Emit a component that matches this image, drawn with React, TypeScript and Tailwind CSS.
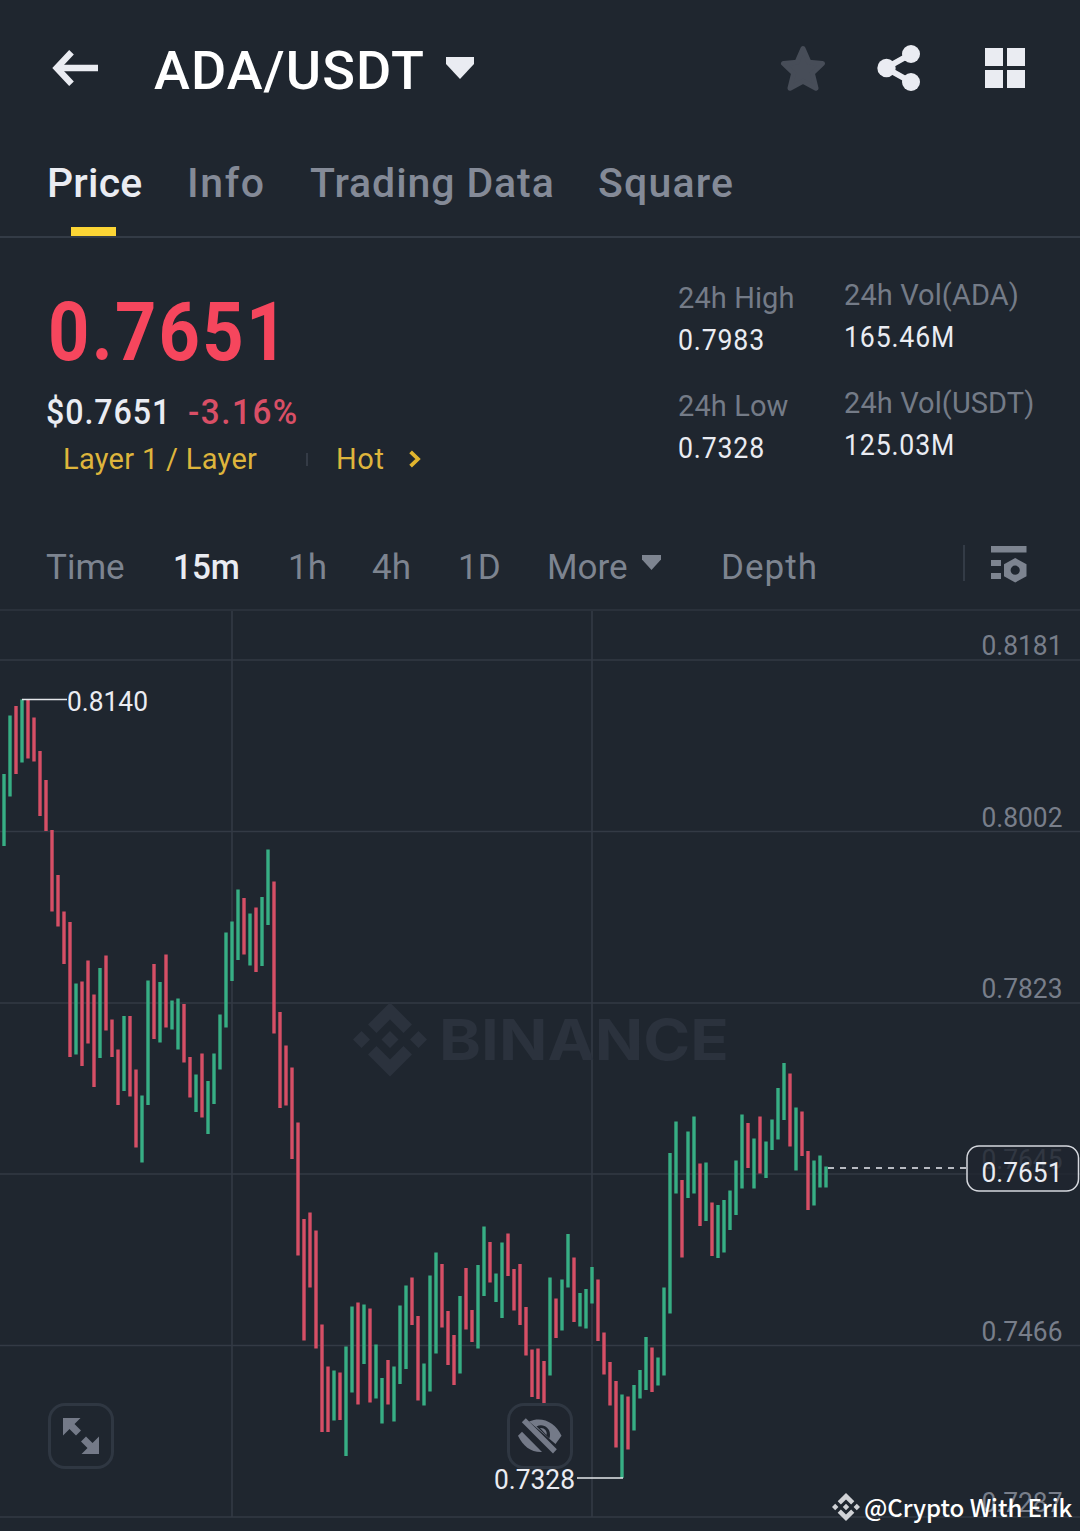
type Candle = ["u" | "d", number, number];

// [direction, high, low] in canvas units, one entry per 15 minute candle
const CANDLES: Candle[] = [
  ["u", 774, 846], ["u", 715.5, 796.5], ["d", 706, 774], ["u", 699.5, 762.5], ["d", 700, 758.5],
  ["d", 717.5, 761.5], ["d", 751, 816], ["d", 780, 831], ["d", 830, 911.5], ["d", 875, 926.5],
  ["d", 911.5, 964], ["d", 922, 1057], ["u", 983.5, 1054.5], ["d", 981.5, 1066], ["d", 960.5, 1043.5],
  ["d", 994.5, 1087], ["u", 968, 1058], ["d", 955.5, 1030.5], ["d", 1019.5, 1057], ["d", 1049.5, 1105],
  ["u", 1016, 1091], ["d", 1016, 1096.5], ["d", 1069.5, 1147.5], ["u", 1095.5, 1162.5], ["u", 980.5, 1105],
  ["d", 964, 1039], ["u", 982, 1042.5], ["d", 954.5, 1027.5], ["u", 1000.5, 1029.5], ["u", 998.5, 1049.5],
  ["d", 1004, 1062.5], ["d", 1057, 1097.5], ["u", 1074.5, 1112], ["d", 1053.5, 1117.5], ["u", 1081, 1134],
  ["u", 1053.5, 1104], ["u", 1014.5, 1069.5], ["u", 932.5, 1027.5], ["u", 921.5, 981], ["u", 889.5, 960],
  ["d", 898, 954.5], ["u", 913.5, 965.5], ["d", 907.5, 972], ["u", 897, 966], ["u", 849.5, 925],
  ["d", 881.5, 1033.5], ["d", 1012, 1108], ["d", 1045.5, 1105.5], ["d", 1067.5, 1159], ["d", 1122.5, 1255.5],
  ["d", 1219, 1340.5], ["d", 1212.5, 1287.5], ["d", 1230.5, 1348.5], ["d", 1324.5, 1432], ["d", 1366.5, 1432],
  ["u", 1370.5, 1420.5], ["d", 1372.5, 1420], ["u", 1346.5, 1456], ["u", 1306.5, 1392.5], ["d", 1302.5, 1404.5],
  ["u", 1304.5, 1364], ["d", 1308.5, 1402.5], ["u", 1344.5, 1398.5], ["u", 1378, 1423.5], ["d", 1360, 1404.5],
  ["u", 1366.5, 1421.5], ["u", 1305.5, 1384], ["u", 1285.5, 1369], ["d", 1277.5, 1325], ["d", 1316, 1400.5],
  ["u", 1363.5, 1405.5], ["u", 1275.5, 1391.5], ["u", 1252.5, 1353.5], ["d", 1264, 1327.5], ["d", 1311, 1365],
  ["d", 1335, 1385], ["u", 1296, 1373.5], ["d", 1268, 1329.5], ["d", 1310, 1342], ["u", 1265, 1348.5],
  ["u", 1226.5, 1296], ["d", 1242, 1282.5], ["u", 1273.5, 1302], ["u", 1242.5, 1318], ["d", 1233.5, 1276],
  ["d", 1269, 1310.5], ["d", 1264, 1325], ["d", 1307, 1355.5], ["d", 1349.5, 1397], ["d", 1348.5, 1399],
  ["d", 1361, 1403.5], ["u", 1277.5, 1375.5], ["d", 1298.5, 1338], ["u", 1279.5, 1330.5], ["u", 1234, 1287.5],
  ["d", 1257.5, 1322], ["u", 1293, 1326.5], ["u", 1289, 1328.5], ["u", 1267, 1303.5], ["d", 1279.5, 1341],
  ["d", 1332.5, 1374.5], ["d", 1362, 1405.5], ["d", 1381, 1447.5], ["u", 1394.5, 1478], ["d", 1396.5, 1449.5],
  ["u", 1385, 1430.5], ["u", 1370, 1398.5], ["u", 1337, 1390], ["d", 1347.5, 1392], ["u", 1357.5, 1385.5],
  ["u", 1287.5, 1375.5], ["u", 1153, 1313.5], ["u", 1121.5, 1193.5], ["d", 1180, 1257.5], ["u", 1131.5, 1198],
  ["u", 1116.5, 1193.5], ["d", 1163.5, 1226], ["u", 1162.5, 1221], ["d", 1202.5, 1256], ["u", 1205, 1258],
  ["u", 1200, 1252.5], ["u", 1190.5, 1230], ["u", 1160.5, 1215], ["u", 1114.5, 1188.5], ["d", 1123, 1168],
  ["u", 1138.5, 1188.5], ["d", 1116.5, 1173.5], ["u", 1141.5, 1178], ["u", 1119.5, 1150], ["u", 1088, 1139.5],
  ["u", 1063, 1120], ["d", 1073.5, 1146.5], ["u", 1107.5, 1170.5], ["d", 1111.5, 1156], ["d", 1151, 1210],
  ["u", 1160.5, 1205.5], ["u", 1155.5, 1187.5], ["u", 1166.5, 1187.5],
];

const PRICE_LEVELS = [
  { label: "0.8181", y: 660 },
  { label: "0.8002", y: 831.5 },
  { label: "0.7823", y: 1003 },
  { label: "0.7645", y: 1174 },
  { label: "0.7466", y: 1345.5 },
  { label: "0.7287", y: 1517 },
];

const TABS = [
  { label: "Price", width: "w-[140px]", tracking: "tracking-[0.2px]", active: true },
  { label: "Info", width: "w-[123px]", tracking: "tracking-[1.6px]", active: false },
  { label: "Trading Data", width: "w-[288px]", tracking: "tracking-[0.9px]", active: false },
  { label: "Square", width: "w-[150px]", tracking: "tracking-[1.2px]", active: false },
];

const INTERVALS = [
  { label: "Time", width: "w-[127px]" },
  { label: "15m", width: "w-[115px]" },
  { label: "1h", width: "w-[84px]" },
  { label: "4h", width: "w-[86px]" },
  { label: "1D", width: "w-[89px]" },
];

export default function App() {
  return (
    <div className="flex h-[1531px] w-[1080px] flex-col overflow-hidden bg-[#1f262f] font-['Roboto',sans-serif] text-[#eaecf2]">
      <Header />
      <Tabs />
      <Ticker />
      <IntervalBar />
      <Chart />
    </div>
  );
}

function Header() {
  return (
    <header className="flex h-[136px] items-center pr-[55px] pl-[52px]">
      <svg width="46" height="36" viewBox="0 0 46 36" fill="none" stroke="#eaecf2" strokeWidth="6.4">
        <path d="M46 18H6" />
        <path d="M19.500 2.200 4.700 18l14.800 15.800" />
      </svg>
      <h1 className="ml-[56px] w-[292px] pt-[5px] text-[54px] leading-none font-medium tracking-[1.1px] whitespace-nowrap text-white">ADA/USDT</h1>
      <svg width="28" height="22" viewBox="0 0 28 22" fill="#eaecf2">
        <path d="M0 0h28v7L14 22 0 7z" />
      </svg>
      <div className="ml-auto flex items-center">
        <svg width="46" height="46" viewBox="0 0 46 46" fill="#474d58" stroke="#474d58" strokeWidth="5" strokeLinejoin="round">
          <path d="M23 3.500l6 13.800 13.500 1.200-10.200 9.700 3.700 15L23 36.200l-13 7 3.700-15L3.500 18.500 17 17.300z" />
        </svg>
        <svg className="ml-[51px]" width="44" height="46" viewBox="0 0 44 46" fill="#eaecf2">
          <path d="M34 9 9 23l25 14" fill="none" stroke="#eaecf2" strokeWidth="6" />
          <circle cx="34" cy="9" r="9" />
          <circle cx="9.500" cy="23" r="9.200" />
          <circle cx="34" cy="37" r="9" />
        </svg>
        <div className="ml-[64px] grid grid-cols-2 gap-[4px]">
          <span className="size-[18px] bg-[#eaecf2]" />
          <span className="size-[18px] bg-[#eaecf2]" />
          <span className="size-[18px] bg-[#eaecf2]" />
          <span className="size-[18px] bg-[#eaecf2]" />
        </div>
      </div>
    </header>
  );
}

function Tabs() {
  return (
    <nav className="flex h-[102px] items-stretch border-b-2 border-[#333b46] pl-[47px]">
      {TABS.map((tab) => (
        <div key={tab.label} className={`flex flex-col justify-between pt-[25px] ${tab.width}`}>
          <span
            className={`text-[41px] leading-[45px] font-medium whitespace-nowrap ${tab.tracking} ${tab.active ? "text-[#eaecf2]" : "text-[#848a97]"}`}
          >
            {tab.label}
          </span>
          {tab.active ? <span className="ml-[24px] h-[9px] w-[45px] bg-[#fcd535]" /> : null}
        </div>
      ))}
    </nav>
  );
}

function Ticker() {
  return (
    <section className="flex h-[286px] justify-between">
      <div className="pt-[53px] pl-[46px]">
        <p className="ml-[2px] origin-left scale-x-88 text-[82px] leading-[82px] font-bold tracking-[2.6px] text-[#f6465d]">0.7651</p>
        <div className="mt-[20px] flex text-[35px] leading-[40px] font-medium">
          <span className="w-[142px] origin-left scale-x-92 tracking-[1px]">$0.7651</span>
          <span className="origin-left scale-x-95 tracking-[1.6px] text-[#d94f66]">-3.16%</span>
        </div>
        <div className="mt-[9px] flex items-center pl-[17px] text-[29px] leading-[34px] text-[#deb53c]">
          <span className="w-[243px] tracking-[0.3px]">Layer 1 / Layer</span>
          <span className="h-[13px] w-[2px] bg-[#343b46]" />
          <span className="ml-[28px] w-[73px] tracking-[0.6px]">Hot</span>
          <svg width="12" height="18" viewBox="0 0 12 18" fill="none" stroke="#e0b42e" strokeWidth="3.8">
            <path d="M1.600 1.800 9 9l-7.400 7.200" />
          </svg>
        </div>
      </div>
      <div className="flex">
        <div className="w-[166px] pt-[43px]">
          <Stat label="24h High" value="0.7983" />
          <Stat label="24h Low" value="0.7328" />
        </div>
        <div className="w-[236px] pt-[40px]">
          <Stat label="24h Vol(ADA)" value="165.46M" />
          <Stat label="24h Vol(USDT)" value="125.03M" />
        </div>
      </div>
    </section>
  );
}

function Stat({ label, value }: { label: string; value: string }) {
  return (
    <div className="h-[108px] whitespace-nowrap">
      <p className="text-[29px] leading-[34px] tracking-[0.1px] text-[#747b87]">{label}</p>
      <p className="mt-[8px] origin-left scale-x-92 text-[29px] leading-[34px] tracking-[0.9px]">{value}</p>
    </div>
  );
}

function IntervalBar() {
  return (
    <div className="flex h-[87px] items-center border-b-2 border-[#2a313b] pl-[46px] text-[35px] leading-none text-[#7d8490]">
      {INTERVALS.map((item) => (
        <span
          key={item.label}
          className={`pt-[2px] ${item.width} ${item.label === "15m" ? "origin-left scale-x-95 font-medium text-[#eaecf2]" : ""}`}
        >
          {item.label}
        </span>
      ))}
      <span className="w-[95px] pt-[2px]">More</span>
      <svg className="-mt-[8px]" width="19" height="15" viewBox="0 0 19 15" fill="#7d8490">
        <path d="M0 0h19v4.500L9.500 15 0 4.500z" />
      </svg>
      <span className="ml-[60px] w-[242px] pt-[2px] tracking-[1px]">Depth</span>
      <span className="-mt-[8px] h-[36px] w-[2px] bg-[#333b46]" />
      <svg className="-mt-[4px] ml-[26px]" width="36" height="37" viewBox="0 0 36 37" fill="#7d8490">
        <path d="M0 0h35.500v6.500H0zM0 14h10v6H0zM0 27h10v6H0z" />
        <path fillRule="evenodd" d="M24.200 12l11.300 6.200v12L24.200 36.500 13 30.200v-12zM24.200 19.600a4.600 4.600 0 1 0 0 9.200 4.600 4.600 0 0 0 0-9.200z" />
      </svg>
    </div>
  );
}

function Chart() {
  return (
    <div className="relative h-[920px] w-full">
      <svg className="block" width="1080" height="920" viewBox="0 611 1080 920" fontFamily="Roboto, sans-serif">
        <g stroke="#333a45" strokeWidth="1.6">
          {PRICE_LEVELS.map((level) => (
            <line key={level.label} x1="0" x2="1080" y1={level.y} y2={level.y} />
          ))}
          <line x1="232" x2="232" y1="611" y2="1517" />
          <line x1="592" x2="592" y1="611" y2="1517" />
        </g>

        <g fill="#2b323d">
          <BinanceMark x={353} y={1002.5} size={74} />
          <text x="439" y="1059.500" fontSize="57" fontWeight="700" fontFamily="Inter, sans-serif" textLength="290" lengthAdjust="spacingAndGlyphs">
            BINANCE
          </text>
        </g>

        {PRICE_LEVELS.map((level) => (
          <text key={level.label} x="981.500" y={level.y - 5} fontSize="27" fill="#787e8a" textLength="81" lengthAdjust="spacingAndGlyphs">
            {level.label}
          </text>
        ))}

        {CANDLES.map(([dir, top, bottom], index) => (
          <rect key={index} x={2.300 + index * 6} y={top} width="3.400" height={bottom - top} fill={dir === "u" ? "#37ae84" : "#d64f66"} />
        ))}

        <path d="M22 699.500h45M577 1478h46" stroke="#e4e6ea" strokeWidth="1.500" />
        <g fill="#eaecf2" fontSize="27">
          <text x="67" y="710.500" textLength="81" lengthAdjust="spacingAndGlyphs">0.8140</text>
          <text x="494" y="1489" textLength="81" lengthAdjust="spacingAndGlyphs">0.7328</text>
        </g>

        <line x1="828" x2="966" y1="1168" y2="1168" stroke="#eaecf2" strokeWidth="1.500" strokeDasharray="6 6" />
        <rect x="967" y="1146" width="111.500" height="45" rx="12" fill="#1f262f" fillOpacity="0.8" stroke="#d5d8de" strokeWidth="1.500" />
        <text x="981.500" y="1182" fontSize="27" fill="#eaecf2" textLength="81" lengthAdjust="spacingAndGlyphs">0.7651</text>
      </svg>

      <button type="button" className="absolute top-[792px] left-[48px] flex size-[66px] items-center justify-center rounded-[17px] border-[3px] border-[#2f3742]">
        <svg width="36" height="36" viewBox="0 0 36 36" fill="#747a88">
          <path d="M0 0h17.500l-6 6 6.500 6.500-5 5L6.500 11 0 17.500z" />
          <path d="M36 36H18.500l6-6-6.500-6.500 5-5 6.500 6.500 6.500-6.500z" />
        </svg>
      </button>
      <button type="button" className="absolute top-[792px] left-[507px] flex size-[66px] items-center justify-center rounded-[17px] border-[3px] border-[#2f3742] bg-[#1f262f]/90">
        <svg width="44" height="36" viewBox="0 0 44 36" fill="#747a88">
          <path d="M3.800 4.300l4-4 31 31-3.800 4.300z" />
          <path d="M0 17.700l4-4 20 20.300C13 34.500 5 28 0 17.700z" />
          <path fillRule="evenodd" d="M11 3.500C24-2 37 4 43.500 17.700L37.500 26zM18.500 8.500l12.800 12C34.500 11.500 26 4.500 18.500 8.500z" />
          <path d="M22 10c4.200-.5 7.500 3 6.500 7z" />
        </svg>
      </button>

      <div className="absolute right-[8px] bottom-[7px] flex items-center">
        <svg width="28" height="28" viewBox="0 0 74 74" fill="#d0d2d6">
          <BinanceMark x={0} y={0} size={74} />
        </svg>
        <span className="ml-[4px] w-[208px] font-['Noto_Sans_CJK_SC',sans-serif] text-[24px] leading-[34px] font-medium tracking-[-0.05px] whitespace-nowrap text-white">@Crypto With Erik</span>
      </div>
    </div>
  );
}

function BinanceMark({ x, y, size }: { x: number; y: number; size: number }) {
  return (
    <g transform={`translate(${x} ${y}) scale(${size / 74})`}>
      <path d="M37 0l22 22-8.500 8.500L37 17 23.500 30.500 15 22z" />
      <path d="M37 74L15 52l8.500-8.500L37 57l13.500-13.500L59 52z" />
      <path d="M37 28.500l8.500 8.500-8.500 8.500-8.500-8.500zM8.500 28.500L17 37l-8.500 8.500L0 37zM65.500 28.500L74 37l-8.500 8.500L57 37z" />
    </g>
  );
}
